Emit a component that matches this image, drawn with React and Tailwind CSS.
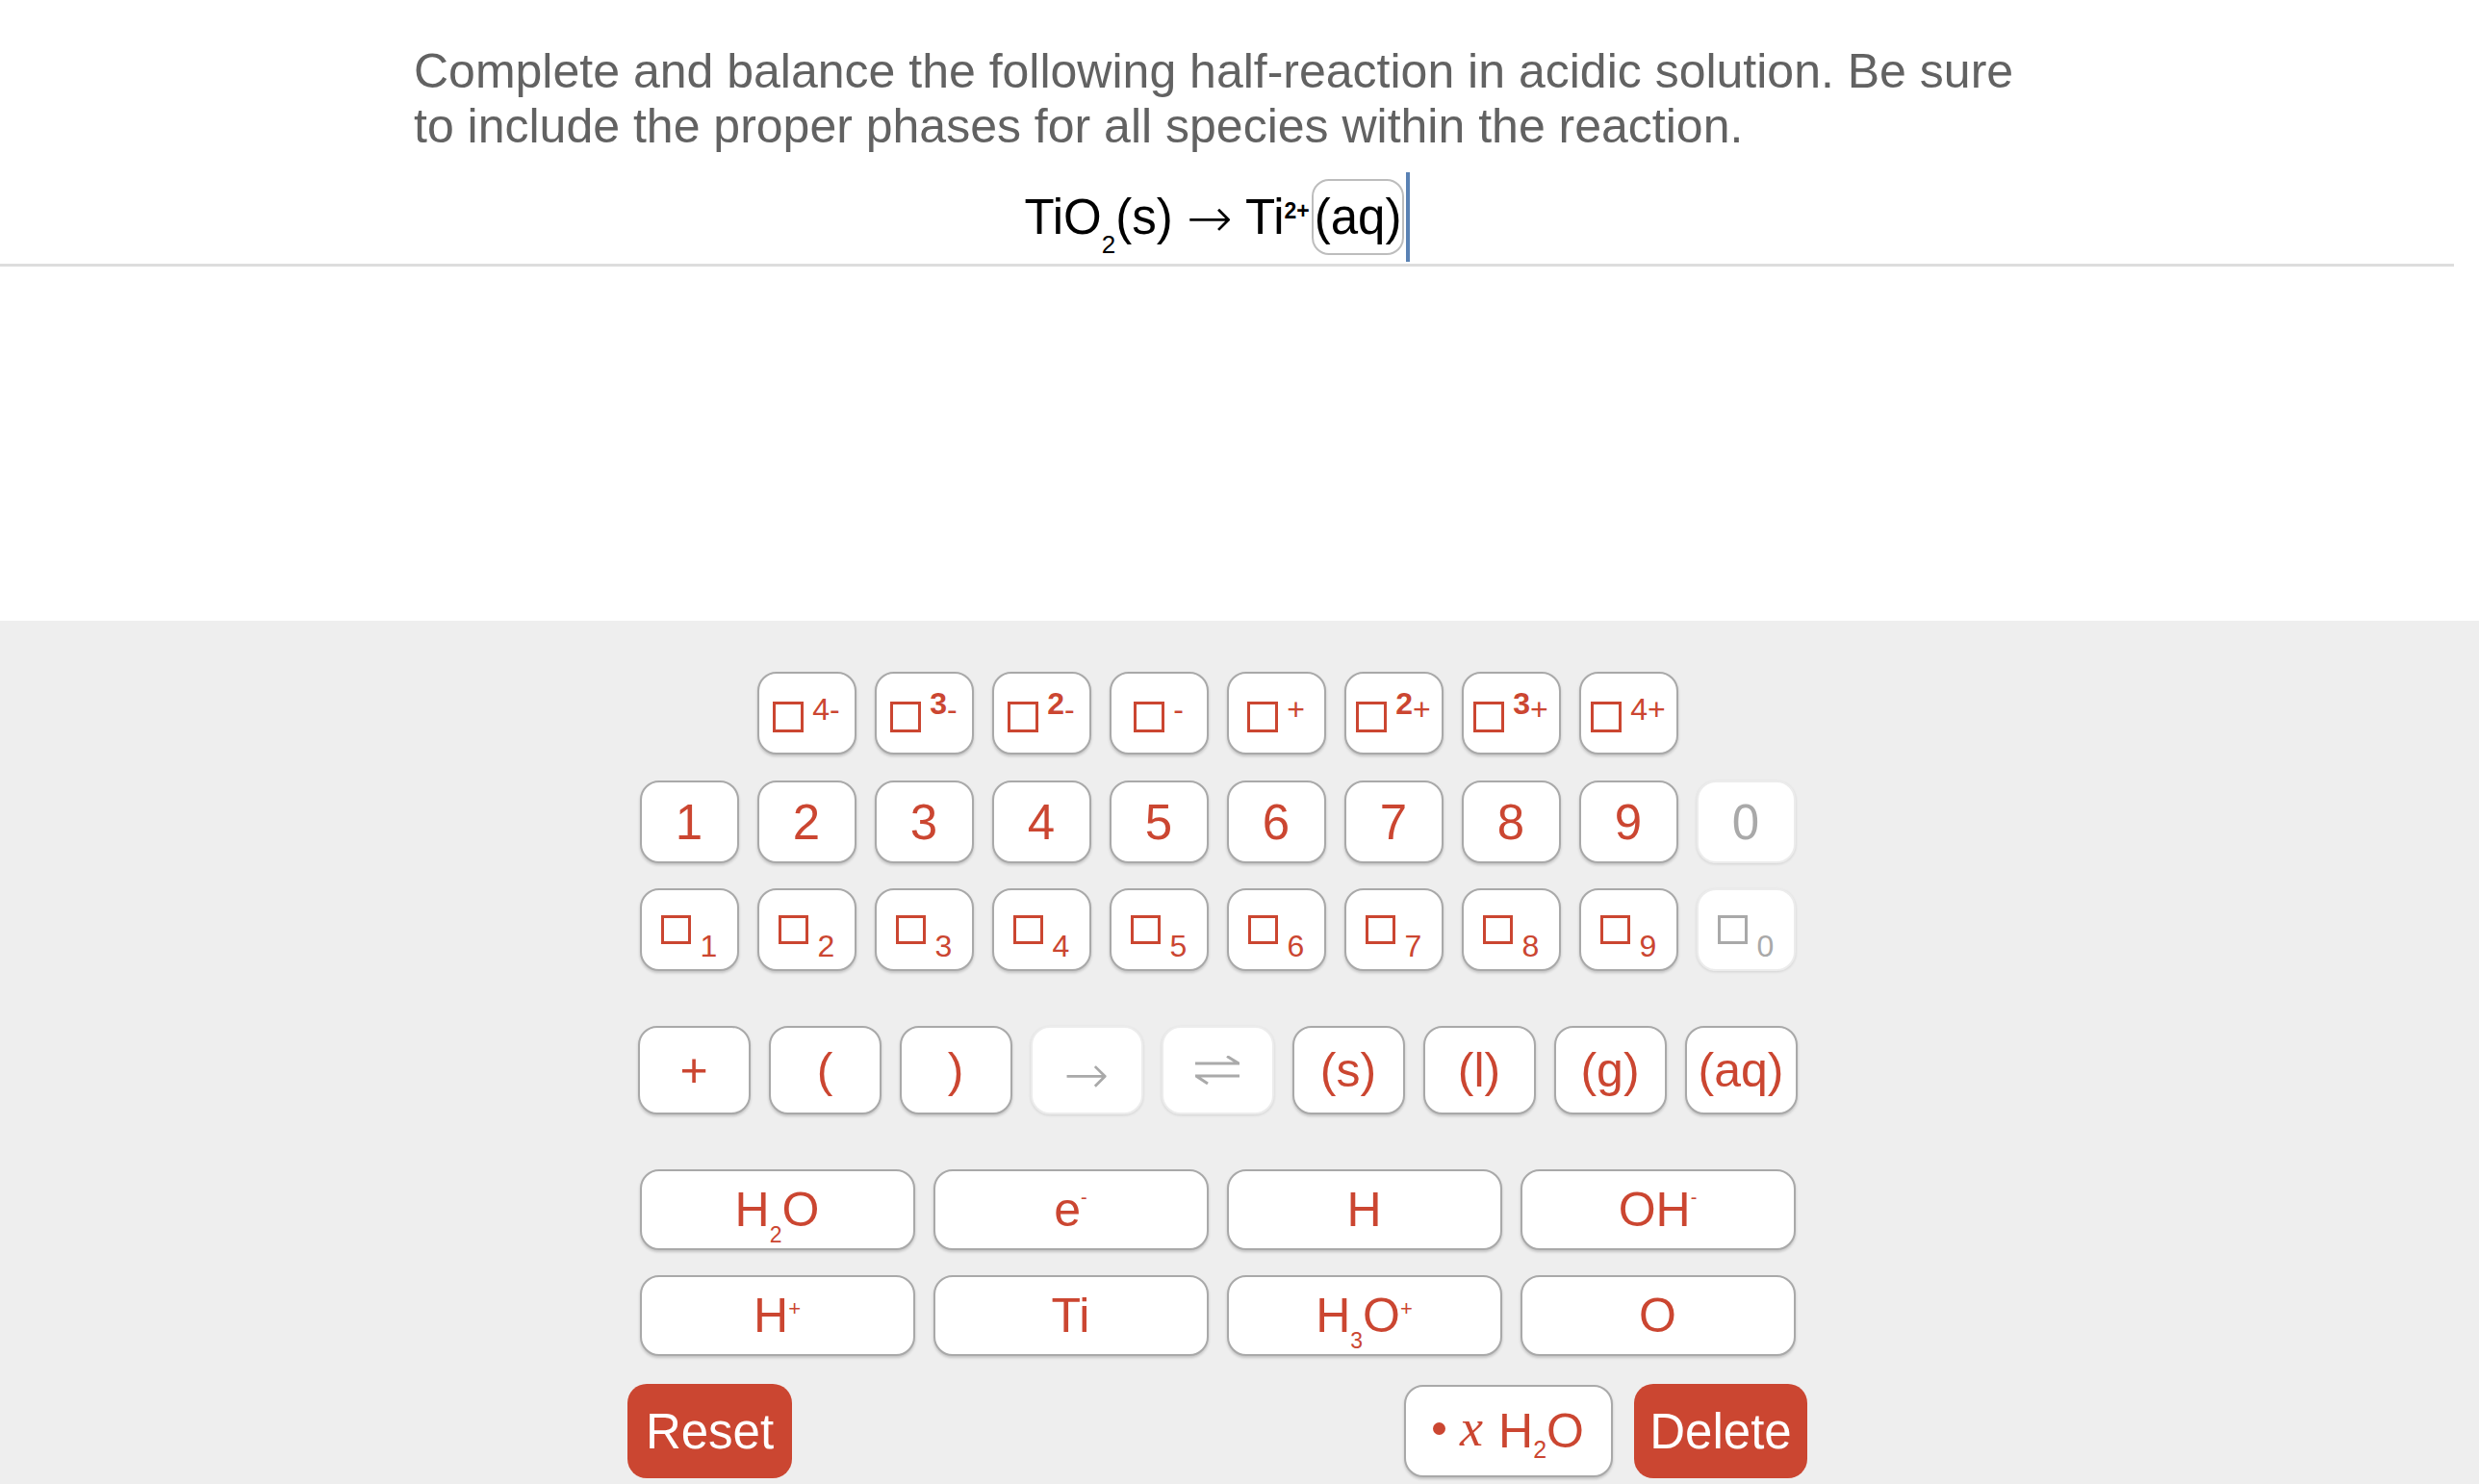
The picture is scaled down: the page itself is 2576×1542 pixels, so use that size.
import React from "react";

const KEY =
  "flex items-center justify-center shrink-0 bg-white rounded-[20px] border-2 border-[#a9a9a9] shadow-[0_2px_3px_rgba(0,0,0,0.18)] text-[#cb4631]";
const KEY_OFF =
  "flex items-center justify-center shrink-0 bg-white rounded-[20px] border-2 border-[#ececec] shadow-[0_1px_3px_rgba(0,0,0,0.12)] text-[#a9a9a9]";

const charges = [
  { n: "4", s: "-", big: false },
  { n: "3", s: "-", big: true },
  { n: "2", s: "-", big: true },
  { n: "", s: "-", big: false },
  { n: "", s: "+", big: false },
  { n: "2", s: "+", big: true },
  { n: "3", s: "+", big: true },
  { n: "4", s: "+", big: false },
];

const digits = ["1", "2", "3", "4", "5", "6", "7", "8", "9"];

const Box = () => (
  <span className="block w-[32px] h-[32px] border-[3px] border-current" />
);

const SmallBox = () => (
  <span className="block w-[31px] h-[30px] border-[3px] border-current" />
);

const Equilibrium = () => (
  <svg width="46" height="30" viewBox="0 0 46 30" fill="none" stroke="#aaaaaa" strokeWidth="3">
    <path d="M0 8 H45 L33 0.5" />
    <path d="M46 21 H1 L13 29" />
  </svg>
);

const Sub = ({ children }) => (
  <span className="text-[23px] leading-none align-[-17px]">{children}</span>
);

const Sup = ({ children }) => (
  <span className="text-[22px] leading-none align-[17px]">{children}</span>
);

export default function App() {
  return (
    <div className="w-[2576px] min-h-[1542px] bg-white font-['Liberation_Sans',Arial,sans-serif]">
      {/* question */}
      <div className="h-[645px] bg-white">
        <div className="ml-[430px] w-[1670px] pt-[46px]">
          <p className="text-[50px] leading-[57px] text-[#626262]">
            Complete and balance the following half-reaction in acidic solution. Be sure to include the
            proper phases for all species within the reaction.
          </p>
          <div className="mt-[18px] h-[96px] leading-[96px] text-center text-[51px] text-black whitespace-nowrap">
            TiO<span className="text-[26px] leading-none align-[-20px]">2</span>(s){" "}
            <span className="font-['DejaVu_Sans',sans-serif] font-extralight text-[57px] leading-none align-[-3px]">
              →
            </span>{" "}
            Ti
            <span className="text-[23px] font-bold leading-none align-[16px] mr-[2px]">2+</span>
            <span className="inline-block leading-none border-2 border-[#bdbdbd] rounded-[18px] py-[12px] px-[1px]">
              (aq)
            </span>
            <span className="inline-block w-[4px] h-[93px] bg-[#5a82b4] align-[-29px] ml-[2px]" />
          </div>
        </div>
        <div className="h-[3px] bg-[#dddddd] mr-[26px]" />
      </div>

      {/* keypad */}
      <div className="h-[897px] bg-[#eeeeee] pt-[53px]">
        <div className="ml-[652px] w-[1226px] flex flex-col">
          <div className="flex justify-center gap-[19px]">
            {charges.map((c, i) => (
              <div key={i} className={KEY + " w-[103px] h-[86px]"}>
                <div className="flex items-start">
                  <span className="mt-[8px]">
                    <Box />
                  </span>
                  <span className="ml-[9px] text-[32px] leading-none">
                    {c.big ? (
                      <span className="font-bold relative -top-[6px]">{c.n}</span>
                    ) : (
                      c.n
                    )}
                    {c.s}
                  </span>
                </div>
              </div>
            ))}
          </div>

          <div className="mt-[27px] flex justify-center gap-[19px]">
            {digits.map((d) => (
              <div key={d} className={KEY + " w-[103px] h-[86px] text-[51px] leading-none"}>
                {d}
              </div>
            ))}
            <div className={KEY_OFF + " w-[103px] h-[86px] text-[51px] leading-none"}>0</div>
          </div>

          <div className="mt-[26px] flex justify-center gap-[19px]">
            {[...digits, "0"].map((d) => (
              <div key={d} className={(d === "0" ? KEY_OFF : KEY) + " w-[103px] h-[86px]"}>
                <SmallBox />
                <span className="ml-[10px] mt-[34px] text-[32px] leading-none">{d}</span>
              </div>
            ))}
          </div>

          <div className="mt-[57px] flex justify-center gap-[19px] text-[50px] leading-none">
            <div className={KEY + " w-[117px] h-[92px]"}>+</div>
            <div className={KEY + " w-[117px] h-[92px]"}>(</div>
            <div className={KEY + " w-[117px] h-[92px]"}>)</div>
            <div className={KEY_OFF + " w-[117px] h-[92px]"}>
              <span className="mt-[10px] font-['DejaVu_Sans',sans-serif] font-extralight text-[56px]">→</span>
            </div>
            <div className={KEY_OFF + " w-[117px] h-[92px]"}>
              <Equilibrium />
            </div>
            <div className={KEY + " w-[117px] h-[92px]"}>(s)</div>
            <div className={KEY + " w-[117px] h-[92px]"}>(l)</div>
            <div className={KEY + " w-[117px] h-[92px]"}>(g)</div>
            <div className={KEY + " w-[117px] h-[92px]"}>(aq)</div>
          </div>

          <div className="mt-[57px] flex justify-center gap-[19px] text-[50px]">
            <div className={KEY + " w-[286px] h-[84px]"}>
              <span>
                H<Sub>2</Sub>O
              </span>
            </div>
            <div className={KEY + " w-[286px] h-[84px]"}>
              <span>
                e<span className="text-[20px] leading-none align-[23px]">-</span>
              </span>
            </div>
            <div className={KEY + " w-[286px] h-[84px]"}>H</div>
            <div className={KEY + " w-[286px] h-[84px]"}>
              <span>
                OH<span className="text-[20px] leading-none align-[23px]">-</span>
              </span>
            </div>
          </div>

          <div className="mt-[26px] flex justify-center gap-[19px] text-[50px]">
            <div className={KEY + " w-[286px] h-[84px]"}>
              <span>
                H<Sup>+</Sup>
              </span>
            </div>
            <div className={KEY + " w-[286px] h-[84px]"}>Ti</div>
            <div className={KEY + " w-[286px] h-[84px]"}>
              <span>
                H<Sub>3</Sub>O<Sup>+</Sup>
              </span>
            </div>
            <div className={KEY + " w-[286px] h-[84px]"}>O</div>
          </div>

          <div className="mt-[29px] flex items-center justify-between">
            <button className="w-[171px] h-[98px] rounded-[20px] bg-[#cb4631] text-white text-[51px] leading-none">
              Reset
            </button>
            <div className="flex items-center gap-[22px]">
              <div className={KEY + " w-[217px] h-[96px] text-[50px]"}>
                <span className="w-[13px] h-[13px] rounded-full bg-[#cb4631] mt-[-6px]" />
                <span className="ml-[15px] font-['Liberation_Serif',serif] italic text-[54px] leading-none mt-[-6px]">
                  x
                </span>
                <span className="ml-[16px]">
                  H<span className="text-[25px] leading-none align-[-11px]">2</span>O
                </span>
              </div>
              <button className="w-[180px] h-[98px] rounded-[20px] bg-[#cb4631] text-white text-[51px] leading-none">
                Delete
              </button>
            </div>
          </div>
        </div>
      </div>
    </div>
  );
}
